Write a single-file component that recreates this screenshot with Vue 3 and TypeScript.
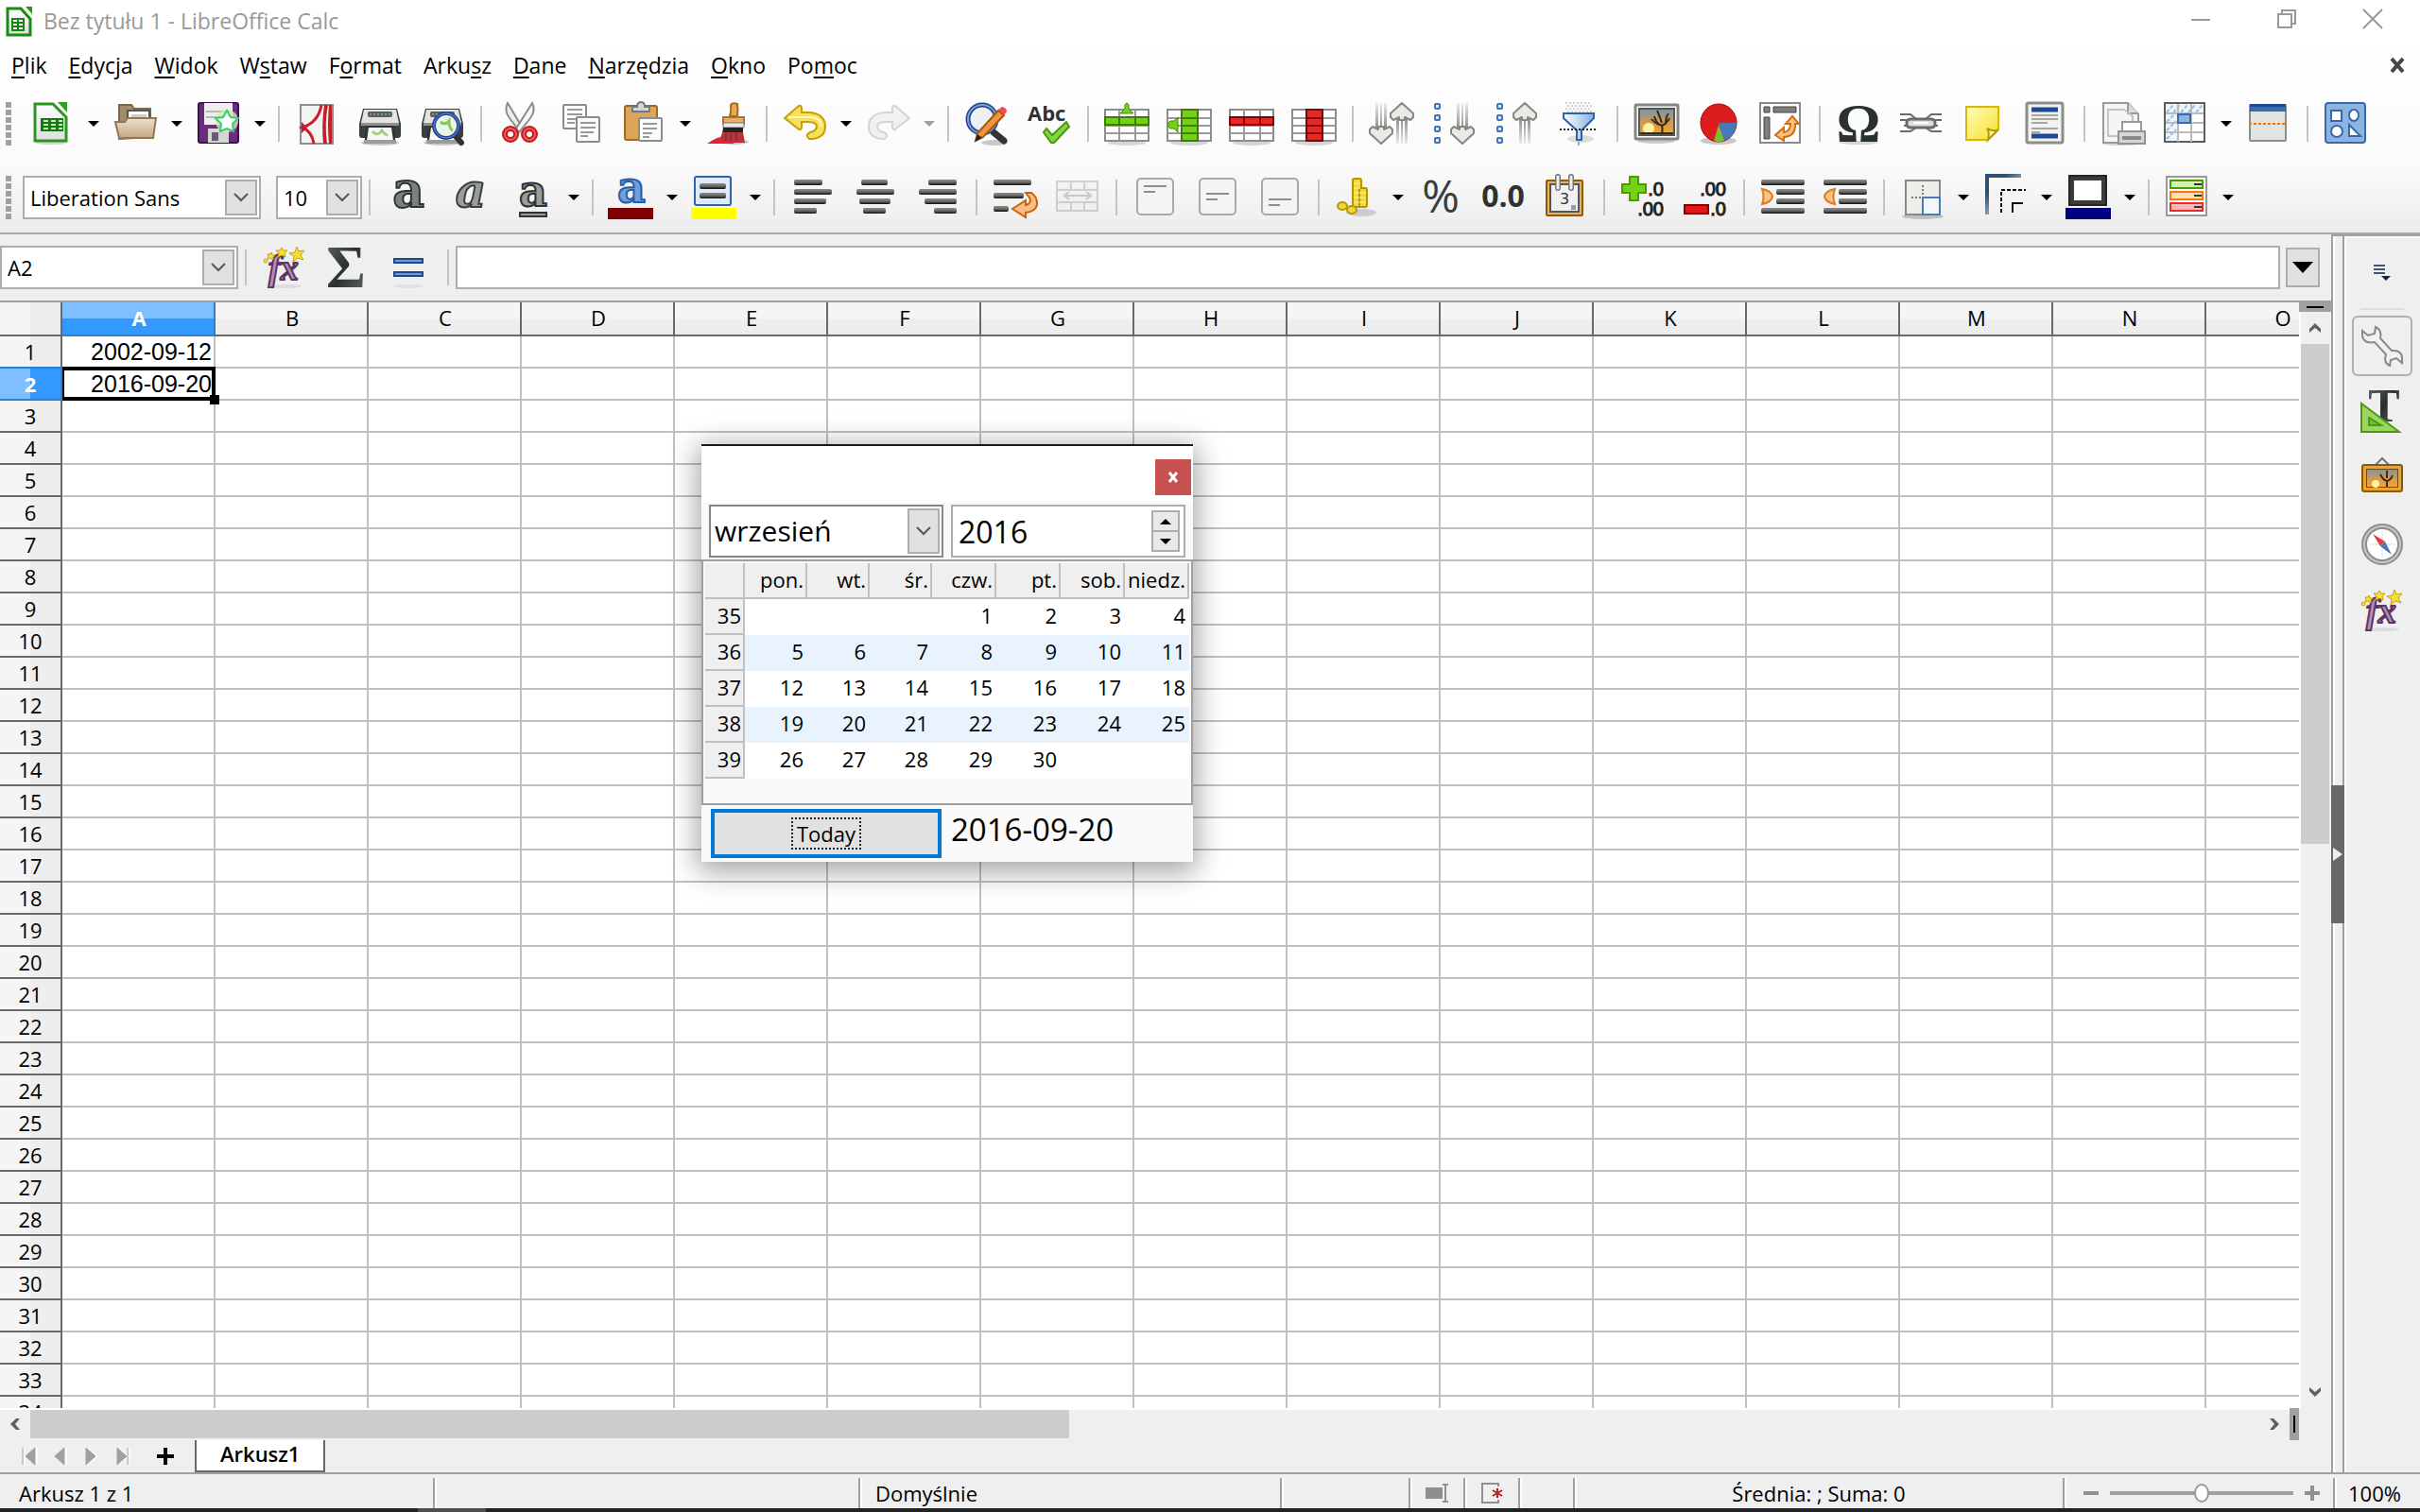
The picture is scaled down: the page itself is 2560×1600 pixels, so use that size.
<script setup lang="ts">
import { ref } from 'vue'

interface Tool {
  icon?: string
  label?: string
  menu?: boolean
  off?: boolean
  sep?: boolean
}

const sep: Tool = { sep: true }
const tool = (icon: string, label: string, menu = false, off = false): Tool => ({ icon, label, menu, off })

const menus: [string, string, string][] = [
  ['', 'P', 'lik'], ['', 'E', 'dycja'], ['', 'W', 'idok'], ['W', 's', 'taw'], ['F', 'o', 'rmat'],
  ['Arku', 's', 'z'], ['', 'D', 'ane'], ['', 'N', 'arzędzia'], ['', 'O', 'kno'], ['Po', 'm', 'oc'],
]

const standardBar: Tool[] = [
  tool('new', 'Nowy', true), tool('open', 'Otwórz', true), tool('save', 'Zapisz', true), sep,
  tool('pdf', 'Eksportuj jako PDF'), tool('print', 'Drukuj'), tool('preview', 'Podgląd wydruku'), sep,
  tool('cut', 'Wytnij'), tool('copy', 'Kopiuj'), tool('paste', 'Wklej', true), tool('brush', 'Klonuj formatowanie'), sep,
  tool('undo', 'Cofnij', true), tool('redo', 'Ponów', true, true), sep,
  tool('find', 'Znajdź i zamień'), tool('spell', 'Pisownia'), sep,
  tool('rowAdd', 'Wstaw wiersz'), tool('colAdd', 'Wstaw kolumnę'), tool('rowDel', 'Usuń wiersz'), tool('colDel', 'Usuń kolumnę'), sep,
  tool('sort', 'Sortuj'), tool('sortAsc', 'Sortuj rosnąco'), tool('sortDesc', 'Sortuj malejąco'), tool('filter', 'Autofiltr'), sep,
  tool('image', 'Obraz'), tool('chart', 'Wykres'), tool('pivot', 'Tabela przestawna'), sep,
  tool('omega', 'Znak specjalny'), tool('link', 'Hiperłącze'), tool('note', 'Komentarz'), tool('header', 'Główki i stopki'), sep,
  tool('area', 'Obszar wydruku'), tool('freeze', 'Zablokuj wiersze i kolumny', true), tool('split', 'Podziel okno'), sep,
  tool('shapes', 'Funkcje rysunkowe'),
]

const formatBar: Tool[] = [
  sep, tool('bold', 'Pogrubienie'), tool('italic', 'Kursywa'), tool('under', 'Podkreślenie', true), sep,
  tool('color', 'Kolor czcionki', true), tool('mark', 'Kolor tła', true), sep,
  tool('left', 'Do lewej'), tool('center', 'Wyśrodkuj'), tool('right', 'Do prawej'), sep,
  tool('wrap', 'Zawijaj tekst'), tool('merge', 'Scal komórki'), sep,
  tool('vtop', 'Do góry'), tool('vmid', 'Wyśrodkuj w pionie'), tool('vbot', 'Do dołu'), sep,
  tool('coins', 'Waluta', true), tool('percent', 'Procent'), tool('number', 'Liczba'), tool('date', 'Data'), sep,
  tool('decAdd', 'Dodaj miejsce dziesiętne'), tool('decDel', 'Usuń miejsce dziesiętne'), sep,
  tool('indent', 'Zwiększ wcięcie'), tool('outdent', 'Zmniejsz wcięcie'), sep,
  tool('borders', 'Krawędzie', true), tool('lineStyle', 'Styl krawędzi', true), tool('lineColor', 'Kolor krawędzi', true), sep,
  tool('cond', 'Formatowanie warunkowe', true),
]

const formulaBar: Tool[] = [
  sep, tool('fx', 'Kreator funkcji'), tool('sigma', 'Suma'), tool('equals', 'Funkcja'), sep,
]

const sideTabs: [string, string][] = [
  ['wrench', 'Właściwości'], ['styles', 'Style'], ['gallery', 'Galeria'], ['compass', 'Nawigator'], ['fx', 'Funkcje'],
]

const bars = (rows: [number, number, number][]): string =>
  rows.map(([x, y, w]) => `<rect x="${x}" y="${y}" width="${w}" height="6" rx="2" fill="url(#bar)"/>`).join('')

const page = (x: number, y: number, w: number, h: number): string =>
  `<rect x="${x + 1}" y="${y + 1}" width="${w - 2}" height="${h - 2}" rx="1" fill="#fbfbfb" stroke="#8b8d88" stroke-width="2"/>`

const gridBase = '<ellipse cx="22" cy="42" rx="20" ry="3" fill="#000" opacity=".15"/><rect x="-1" y="7" width="46" height="33" fill="#fff" stroke="#8c8c8c" stroke-width="2"/><path d="M-1 16h46M-1 24h46M-1 32h46M14 7v33M31 7v33" stroke="#9a9a9a" stroke-width="2"/>'

const printer = '<ellipse cx="22" cy="42" rx="20" ry="3" fill="#000" opacity=".2"/><path d="M4 6h36l4 16v12q0 3-3 3H3q-3 0-3-3V22z" fill="#3a3f41"/><path d="M5 7h34l3 14H2z" fill="#e3e4e1"/><rect x="9" y="9" width="26" height="6" rx="2" fill="#55605a"/><path d="M11 12h22" stroke="#89918b" stroke-width="2" stroke-dasharray="2 2"/><path d="M2 21h40v3H2z" fill="#8d928f"/><path d="M6 30l3-6h26l3 6v12H6z" fill="#2e3436"/><path d="M10 26h24l2 14H8z" fill="#f6f8f3"/><path d="M14 30q5 6 10-1q4 6 6 4" stroke="#a5cf7d" stroke-width="3" fill="none"/><rect x="5" y="39" width="34" height="4" fill="#9a9d99"/>'

const stars = '<g fill="#f5dd3b" stroke="#c9a400" stroke-width="1"><path d="M35 0l2 5 6-1-4 5 3 5-6-2-5 4 1-6-5-3 6-1z"/><path d="M19 1l2 3 4 0-3 3 1 4-4-2-4 2 1-4-3-3 4 0z"/><path d="M8 6l1 3 3 0-2 2 0 3-3-2-3 1 1-3-1-2 3 0z"/><circle cx="2" cy="15" r="2"/></g>'

const tree = (x: number, y: number, w: number, h: number): string =>
  `<rect x="${x}" y="${y}" width="${w}" height="${h}" fill="url(#dusk)"/><circle cx="${x + 9}" cy="${y + h - 6}" r="6" fill="#fff2a0"/><path d="M${x + w - 12} ${y + h}q1-6 0-9q-6-2-8-10m8 10q5-2 8-8m-8 5q-2-6-5-13m9 13q0-6 3-10m-10 12q-5-2-8-6" stroke="#3a2c17" stroke-width="2" fill="none"/><path d="M${x} ${y + h - 1}h${w}" stroke="#3a2c17" stroke-width="2"/>`

const dotCol = '<g fill="#dce8f6" stroke="#3f73b5" stroke-width="2"><rect x="2" y="1" width="5" height="5" rx="1"/><rect x="2" y="13" width="5" height="5" rx="1"/><rect x="2" y="25" width="5" height="5" rx="1"/><rect x="2" y="37" width="5" height="5" rx="1"/></g>'

const arrowDown = (x: number): string =>
  `<path d="M${x - 6} 0h3v27h-3zM${x - 1} 0h2v27h-2zM${x + 3} 0h3v27h-3z" fill="url(#shaftDown)"/><path d="M${x - 12} 28l3-3 6 3v-3h6v3l6-3 3 3v4l-12 11-12-11z" fill="#e9ebe7" stroke="#85887f" stroke-width="2" stroke-linejoin="round"/>`

const arrowUp = (x: number): string =>
  `<path d="M${x - 6} 16h3v27h-3zM${x - 1} 16h2v27h-2zM${x + 3} 16h3v27h-3z" fill="url(#shaftUp)"/><path d="M${x - 12} 15l3 3 6-3v3h6v-3l6 3 3-3v-4L${x} 0l-12 11z" fill="#e9ebe7" stroke="#85887f" stroke-width="2" stroke-linejoin="round"/>`

const undoPath = '<path d="M0 16L15 3q3-1 3 3v4h9q16 2 16 15q0 11-13 13h-4q-5-4 1-7q6-1 7-6q0-5-9-5h-7v6q-1 4-4 1z"'

const vbox = (y: number): string =>
  `<rect x="3" y="2" width="38" height="38" rx="4" fill="#f4f4f3" stroke="#a9a9a7" stroke-width="2"/><path d="M10 ${y}h24M10 ${y + 6}h12" stroke="#8d8f8a" stroke-width="2"/>`

const icons: Record<string, string> = {
  new: '<ellipse cx="20" cy="42" rx="17" ry="2" fill="#000" opacity=".15"/><path d="M3 1h19l14 14v25H3z" fill="url(#sheet)" stroke="#2f9423" stroke-width="3"/><path d="M27 -1h10v11z" fill="#2aa01f"/><path d="M9 16h24v14H9z" fill="#137a0f"/><path d="M12 19h5M20 19h5M28 19h4M12 23h5M20 23h5M28 23h4M12 27h5M20 27h5M28 27h4" stroke="#c6eab9" stroke-width="2"/>',
  open: '<path d="M4 38V2h13l3 4h17v30z" fill="#a38d69" stroke="#7d6943" stroke-width="2"/><path d="M13 8h23v14H13z" fill="#fff" stroke="#555" stroke-width="2"/><path d="M17 12h16v8H17z" fill="#ccc"/><path d="M0 20h10l3-4h30l-3 21H4z" fill="url(#folder)" stroke="#8f7853" stroke-width="2"/>',
  save: '<rect x="0" y="0" width="42" height="42" rx="2" fill="#6c2d7e" stroke="#3d0f4c" stroke-width="2"/><path d="M6 0h30v23H6z" fill="#eeeeec"/><path d="M8 9h26M8 15h26" stroke="#b8bab5" stroke-width="2"/><path d="M10 27h22v15H10z" fill="#d3d7cf"/><path d="M14 31h7v9h-7z" fill="#6c5a75"/><circle cx="30" cy="19" r="12" fill="#cdf3a3" opacity=".8"/><path d="M30 8l4 7 8 1-6 6 1 8-7-3-7 3 1-8-6-6 8-1z" fill="#fff" stroke="#40c573" stroke-width="2"/>',
  pdf: '<rect x="4" y="2" width="34" height="41" fill="#f3f3f3" stroke="#8f8f8f" stroke-width="2"/><path d="M29 2h4q-4 20-1 41h-4q-2-20 1-41z" fill="#c61f28"/><path d="M37 2v41h-3q-2-20 0-41z" fill="#c61f28"/><path d="M26 2q-3 18-20 24q10 4 12 17" fill="none" stroke="#c61f28" stroke-width="3"/><path d="M5 20l6 6-6 6z" fill="#c61f28"/>',
  print: printer,
  preview: printer + '<path d="M35 34l7 8" stroke="#333" stroke-width="6" stroke-linecap="round"/><circle cx="26" cy="24" r="13" fill="#e9f4ea" stroke="#24478f" stroke-width="4"/><circle cx="26" cy="24" r="13" fill="none" stroke="#5f86cf" stroke-width="1"/><path d="M20 20q5 4 9-1q0 8 4 10" stroke="#8fc45a" stroke-width="3" fill="none"/>',
  cut: '<path d="M9 0q-4 8 2 16l10 13 3-4z" fill="#eee" stroke="#8a8d87" stroke-width="2"/><path d="M35 0q4 8-2 16L21 31l-3-4z" fill="#f8f8f8" stroke="#8a8d87" stroke-width="2"/><circle cx="12" cy="33" r="6" fill="none" stroke="#c8161d" stroke-width="6"/><circle cx="32" cy="33" r="6" fill="none" stroke="#c8161d" stroke-width="6"/><circle cx="12" cy="33" r="6" fill="none" stroke="#ef5a5a" stroke-width="2"/><circle cx="32" cy="33" r="6" fill="none" stroke="#ef5a5a" stroke-width="2"/>',
  copy: page(1, 1, 26, 27) + '<path d="M6 7h16M6 12h16M6 17h14M6 21h8" stroke="#999" stroke-width="2"/>' + page(15, 14, 26, 28) + '<path d="M20 21h16M20 26h16M20 31h14M20 35h8" stroke="#999" stroke-width="2"/>',
  paste: '<rect x="1" y="3" width="34" height="36" rx="2" fill="#dda45a" stroke="#9b6a26" stroke-width="2"/><path d="M9 9V4h5q0-5 4-5t4 5h5v5z" fill="#d5d7d3" stroke="#777" stroke-width="2"/>' + page(15, 15, 26, 26) + '<path d="M20 22h15M20 27h15M20 32h10M20 36h7" stroke="#999" stroke-width="2"/>',
  brush: '<ellipse cx="28" cy="41" rx="16" ry="3" fill="#000" opacity=".2"/><path d="M24 14q2-6 1-12q2-3 7-1q1 6 0 13z" fill="#e9a95b" stroke="#a56a1c" stroke-width="2"/><path d="M17 15h22v7H17z" fill="#e7ae66" stroke="#a8742f" stroke-width="2"/><path d="M17 21h22v5H17z" fill="#e8e8e6" stroke="#777" stroke-width="1"/><path d="M17 26h21v6H16z" fill="#222"/><path d="M16 31h22l2 11H8q7-4 8-11z" fill="#b73540"/><path d="M0 43q9-6 14-7l-2 4q15 0 17 3z" fill="#e8222a"/><path d="M20 32v8M25 32v8M31 32v8" stroke="#7a1d26" stroke-width="1"/>',
  undo: undoPath + ' fill="#f6e05a" stroke="#c5a000" stroke-width="2"/><path d="M4 15h24q11 1 11 10" fill="none" stroke="#fff8b8" stroke-width="2"/>',
  redo: '<g transform="translate(44 0) scale(-1 1)" opacity=".45">' + undoPath + ' fill="#e4e4e4" stroke="#a5a5a5" stroke-width="2"/></g>',
  find: '<ellipse cx="30" cy="42" rx="14" ry="3" fill="#000" opacity=".2"/><path d="M29 31l11 9" stroke="#333" stroke-width="7" stroke-linecap="round"/><circle cx="17" cy="17" r="15" fill="#eef1f4" stroke="#23438c" stroke-width="5"/><circle cx="17" cy="17" r="15" fill="none" stroke="#7b9ddd" stroke-width="2"/><path d="M10 40l2-8L34 8l6 5-22 23z" fill="#f0953c" stroke="#a8590f" stroke-width="2"/><path d="M34 7l4-3q5 1 5 5l-3 4z" fill="#ef4a50"/><path d="M9 41l3-8 5 4z" fill="#222"/>',
  spell: '<text x="-1" y="19" font-family="Open Sans" font-weight="700" font-size="22" fill="#2e3436">Abc</text><path d="M19 27l6 7L40 20l3 5-16 17h-3l-8-11z" fill="#83d63f" stroke="#4a9a0c" stroke-width="2"/>',
  rowAdd: gridBase + '<path d="M-1 15h46v8H-1z" fill="#73d216" stroke="#3f7d00" stroke-width="2"/><path d="M14 15v8M31 15v8" stroke="#3f7d00" stroke-width="2"/><path d="M15 11l5-5V2q2-4 4 0v4l5 5z" fill="#73d216" stroke="#3f8f00" stroke-width="1"/>',
  colAdd: gridBase + '<path d="M14 7h17v33H14z" fill="#73d216" stroke="#3f7d00" stroke-width="2"/><path d="M14 16h17M14 24h17M14 32h17" stroke="#3f7d00" stroke-width="2"/><path d="M10 15v16l-4-4H2q-5-4 0-8h4z" fill="#73d216" stroke="#3f8f00" stroke-width="1"/>',
  rowDel: gridBase + '<path d="M-1 15h46v8H-1z" fill="#e52828" stroke="#8b0000" stroke-width="2"/><path d="M14 15v8M31 15v8" stroke="#8b0000" stroke-width="2"/>',
  colDel: gridBase + '<path d="M14 7h17v33H14z" fill="#e52828" stroke="#8b0000" stroke-width="2"/><path d="M14 16h17M14 24h17M14 32h17" stroke="#8b0000" stroke-width="2"/>',
  sort: arrowDown(11) + arrowUp(33),
  sortAsc: dotCol + arrowDown(31),
  sortDesc: dotCol + arrowUp(31),
  filter: '<path d="M8 0h28M10 3h28M8 6h28M10 9h28" stroke="#aaa" stroke-width="1" stroke-dasharray="2 2"/><ellipse cx="24" cy="38" rx="14" ry="4" fill="#000" opacity=".12"/><path d="M6 11h32v5L25 29v10h-5V29L6 16z" fill="url(#funnel)" stroke="#2a62ab" stroke-width="2"/><path d="M2 28h40" stroke="#222" stroke-width="2" stroke-dasharray="2 2"/><path d="M22 41v4" stroke="#555" stroke-width="1"/>',
  image: '<ellipse cx="22" cy="40" rx="20" ry="3" fill="#000" opacity=".2"/><rect x="0" y="2" width="45" height="36" rx="1" fill="#fff" stroke="#85877f" stroke-width="3"/><rect x="3" y="5" width="39" height="30" fill="#55574f"/>' + tree(5, 7, 35, 26),
  chart: '<ellipse cx="22" cy="40" rx="19" ry="4" fill="#000" opacity=".2"/><ellipse cx="22" cy="21" rx="19" ry="20" fill="#dd1d1d" stroke="#a40000" stroke-width="1"/><path d="M22 21h19q-1 15-14 19z" fill="#4778b8"/><path d="M22 23l6 17q-6 2-11 0z" fill="#7cbf2f"/>',
  pivot: '<rect x="0" y="0" width="42" height="42" fill="#fff" stroke="#8b8b8b" stroke-width="2"/><path d="M4 4h6v6H4zM14 4h24v6H14zM4 15h6v23H4z" fill="#7d7f7a" stroke="#444" stroke-width="1"/><path d="M34 14l7 8h-4q1 13-12 14v4l-9-6 9-8v5q7-1 7-9h-5z" fill="#f9c48c" stroke="#d96d0a" stroke-width="2"/>',
  omega: '<ellipse cx="22" cy="42" rx="20" ry="2" fill="#000" opacity=".15"/><text x="22" y="41" text-anchor="middle" font-family="Liberation Serif" font-weight="700" font-size="58" fill="#2a3133">Ω</text>',
  link: '<g fill="none" stroke="#6a6c68" stroke-width="2"><path d="M0 12h11l6 5h10l6-5h11M0 18h6l5 4M44 18h-6l-5 4M0 30h11l6-4h10l6 4h11M4 24h7M33 24h7"/><rect x="7" y="17" width="30" height="9" rx="4" fill="#ddd" stroke-width="3"/><path d="M14 21h16" stroke="#fff"/></g>',
  note: '<path d="M4 4h34v24l-11 11H4z" fill="url(#noteFill)" stroke="#d9b800" stroke-width="2"/><path d="M27 39q2-9-1-12q8 4 12 1z" fill="#fff7a8" stroke="#b59b00" stroke-width="2"/>',
  header: '<rect x="2" y="0" width="38" height="42" rx="2" fill="#f2f2f1" stroke="#8b8d88" stroke-width="3"/><path d="M7 7h28M7 35h28" stroke="#1d4a93" stroke-width="5"/><path d="M7 13h28M7 17h28M7 21h17M7 27h28M7 31h9" stroke="#a5a7a2" stroke-width="2"/>',
  area: '<ellipse cx="20" cy="43" rx="20" ry="2" fill="#000" opacity=".15"/><path d="M1 0h26l11 12v30H1z" fill="#f5f5f4" stroke="#9a9a98" stroke-width="2"/><path d="M27 0v11h11" fill="#ddd" stroke="#999" stroke-width="2"/><path d="M32 20v-6l-9-7H6v28h11" fill="none" stroke="#c4c4c2" stroke-width="2"/><path d="M21 20h20v11H21z" fill="#fff" stroke="#999" stroke-width="2"/><path d="M17 30h28v13H17z" fill="#d6d6d4" stroke="#929290" stroke-width="2"/><path d="M21 37h20" stroke="#888" stroke-width="4"/>',
  freeze: '<rect x="0" y="0" width="42" height="41" fill="#fff" stroke="#5c5e5a" stroke-width="2"/><path d="M1 1h40v10H14v29H1z" fill="#eef4fa"/><path d="M2 10l7-8M9 10l7-8M17 10l7-8M25 10l7-8M33 10l7-8M2 20l10-10M2 29l10-10M2 38l10-10" stroke="#9bbfe2" stroke-width="2" stroke-dasharray="4 2"/><path d="M14 1v40M28 1v40M1 11h40M1 21h40M1 31h40" stroke="#b9bbb5" stroke-width="2"/><path d="M14 12h13v9H14z" fill="#8db3df" stroke="#3b6aa8" stroke-width="2"/>',
  split: '<rect x="2" y="2" width="38" height="38" rx="1" fill="#e3e3e1" stroke="#8b8d88" stroke-width="2"/><path d="M2 1h38v8H2z" fill="#356cb3"/><path d="M2 1h38v3H2z" fill="#1d4a93"/><path d="M1 22h40" stroke="#f57900" stroke-width="2" stroke-dasharray="3 2"/>',
  shapes: '<rect x="0" y="0" width="42" height="42" rx="3" fill="#8db3df" stroke="#3769ad" stroke-width="2"/><g fill="#fff" stroke="#3769ad" stroke-width="2"><rect x="6" y="8" width="11" height="11"/><ellipse cx="30" cy="13" rx="5" ry="6"/><ellipse cx="12" cy="30" rx="6" ry="6"/><path d="M25 23v12h12z"/></g>',
  bold: '<text x="22" y="32" text-anchor="middle" font-family="DejaVu Serif" font-weight="700" font-size="52" fill="#7d807c" stroke="#2e3436" stroke-width="2">a</text>',
  italic: '<text x="22" y="32" text-anchor="middle" font-family="DejaVu Serif" font-style="italic" font-weight="700" font-size="50" fill="#9a9c98" stroke="#3a3f41" stroke-width="2">a</text>',
  under: '<text x="22" y="31" text-anchor="middle" font-family="DejaVu Serif" font-weight="700" font-size="46" fill="#9a9c98" stroke="#2e3436" stroke-width="2">a</text><rect x="8" y="38" width="28" height="4" fill="#999" stroke="#2e3436" stroke-width="2"/>',
  color: '<text x="22" y="27" text-anchor="middle" font-family="DejaVu Serif" font-weight="700" font-size="46" fill="#6fa0dc" stroke="#2a5ea8" stroke-width="2">a</text><path d="M-3 33h48v12H-3z" fill="#800000"/>',
  mark: '<rect x="1" y="0" width="38" height="30" rx="2" fill="#dfeafa" stroke="#2f64ac" stroke-width="2"/>' + bars([[6, 7, 28], [6, 17, 28]]) + '<path d="M-3 33h48v12H-3z" fill="#ff0"/>',
  left: bars([[2, 3, 30], [2, 13, 40], [2, 23, 34], [2, 33, 24]]),
  center: bars([[7, 3, 28], [2, 13, 40], [5, 23, 33], [9, 33, 24]]),
  right: bars([[12, 3, 30], [2, 13, 40], [8, 23, 34], [18, 33, 24]]),
  wrap: bars([[-1, 3, 40], [-1, 17, 32], [-1, 31, 16]]) + '<path d="M33 17h6q7 5 6 13q-2 7-12 8v5l-14-9 14-9v5q7-2 4-8z" fill="#f7bd84" stroke="#cf6206" stroke-width="2"/>',
  merge: '<g opacity=".4"><rect x="0" y="5" width="43" height="31" fill="#eee" stroke="#999" stroke-width="2"/><path d="M15 5v9M29 5v9M15 27v9M29 27v9M0 14h43M0 27h43" stroke="#999" stroke-width="2"/><path d="M9 20h26M13 16l-5 4 5 4M31 16l5 4-5 4" fill="none" stroke="#888" stroke-width="2"/></g>',
  vtop: vbox(10),
  vmid: vbox(18),
  vbot: vbox(24),
  coins: '<ellipse cx="26" cy="38" rx="16" ry="4" fill="#000" opacity=".15"/><g fill="#f0d93c" stroke="#b89400" stroke-width="2"><rect x="17" y="2" width="9" height="30" rx="2"/><rect x="24" y="12" width="8" height="20" rx="2"/><ellipse cx="6" cy="31" rx="5" ry="4"/><ellipse cx="16" cy="35" rx="5" ry="4"/></g><path d="M18 7h7M18 12h7M18 17h7M18 22h7M18 27h7M25 17h6M25 22h6M25 27h6" stroke="#fff3a0" stroke-width="1"/>',
  percent: '<text x="22" y="38" text-anchor="middle" font-family="Open Sans" font-size="48" fill="#3a3d3b">%</text>',
  number: '<text x="22" y="32" text-anchor="middle" font-family="Open Sans" font-weight="700" font-size="32" fill="#2e3233">0.0</text>',
  date: '<rect x="2" y="4" width="38" height="37" rx="1" fill="#e3b36a" stroke="#8f5902" stroke-width="2"/><rect x="6" y="8" width="30" height="29" fill="#f1f1f1" stroke="#555753" stroke-width="2"/><path d="M14 0v12M28 0v12" stroke="#777" stroke-width="6" stroke-linecap="round"/><path d="M14 0v12M28 0v12" stroke="#eee" stroke-width="3" stroke-linecap="round"/><text x="21" y="29" text-anchor="middle" font-family="DejaVu Sans" font-size="16" fill="#333">3</text><path d="M28 30h5v5h-5z" fill="#999"/>',
  decAdd: '<path d="M8 0h9v8h8v9h-8v8H8v-8H0V8h8z" fill="#73d216" stroke="#4e9a06" stroke-width="2"/><text x="44" y="20" text-anchor="end" font-family="Liberation Sans" font-size="20" stroke="#222" fill="#222">.0</text><text x="44" y="41" text-anchor="end" font-family="Liberation Sans" font-size="20" stroke="#222" fill="#222">.00</text>',
  decDel: '<path d="M0 30h25v9H0z" fill="#e01818" stroke="#8b0000" stroke-width="2"/><text x="44" y="20" text-anchor="end" font-family="Liberation Sans" font-size="20" stroke="#222" fill="#222">.00</text><text x="44" y="41" text-anchor="end" font-family="Liberation Sans" font-size="20" stroke="#222" fill="#222">.0</text>',
  indent: bars([[-1, 3, 46], [15, 13, 30], [15, 23, 30], [-1, 33, 46]]) + '<path d="M0 13q10 2 11 8q-1 6-11 8q3-8 0-16z" fill="#f9c48c" stroke="#e07b1c" stroke-width="2"/>',
  outdent: bars([[-1, 3, 46], [15, 13, 30], [15, 23, 30], [-1, 33, 46]]) + '<path d="M11 13q-10 2-11 8q1 6 11 8q-3-8 0-16z" fill="#f9c48c" stroke="#e07b1c" stroke-width="2"/>',
  borders: '<ellipse cx="22" cy="42" rx="22" ry="3" fill="#000" opacity=".2"/><rect x="4" y="4" width="36" height="36" fill="#eceeea" stroke="#888a85" stroke-width="2"/><path d="M22 9v12M10 22h11" stroke="#777" stroke-width="2" stroke-dasharray="2 2"/><rect x="22" y="22" width="18" height="18" fill="#f4f6f9" stroke="#4a7abb" stroke-width="2"/>',
  lineStyle: '<path d="M2 40V-1h36" fill="none" stroke="url(#fade)" stroke-width="4"/><path d="M17 38V14h26" fill="none" stroke="#111" stroke-width="2" stroke-dasharray="4 2"/><path d="M29 38V28h11" fill="none" stroke="#111" stroke-width="2"/>',
  lineColor: '<rect x="3" y="1" width="35" height="27" fill="#fff" stroke="#3b3b3b" stroke-width="6"/><path d="M1 -1h39v31H1z" fill="none" stroke="#111" stroke-width="1"/><path d="M-3 33h48v12H-3z" fill="#000080"/>',
  cond: '<rect x="0" y="0" width="42" height="41" fill="#fff" stroke="#999" stroke-width="2"/><g stroke-width="2"><rect x="4" y="4" width="34" height="8" fill="#d3f2b0" stroke="#4e9a06"/><rect x="4" y="16" width="34" height="8" fill="#fde0b5" stroke="#f57900"/><rect x="4" y="28" width="34" height="8" fill="#f8b8b8" stroke="#ef2929"/></g><path d="M29 8h8M29 20h8M29 32h8" stroke="#2e3436" stroke-width="2"/>',
  fx: '<ellipse cx="24" cy="42" rx="16" ry="2" fill="#000" opacity=".08"/><text x="5" y="35" font-family="Liberation Serif" font-style="italic" font-weight="700" font-size="38" fill="#b98fb2" stroke="#5c3566" stroke-width="2">fx</text>' + stars,
  sigma: '<text x="21" y="43" text-anchor="middle" font-family="Liberation Serif" font-weight="700" font-size="64" fill="url(#steel)">Σ</text>',
  equals: '<ellipse cx="21" cy="42" rx="16" ry="2" fill="#000" opacity=".06"/><path d="M6 13h30v4H6zM6 27h30v4H6z" fill="#6f9cd8" stroke="#204a87" stroke-width="2"/>',
  wrench: '<path d="M1 6l6 5 7-2 1-7q7 3 5 12l12 13q10-1 11 7v6l-6-5-6 2-1 6q-7-3-4-12L14 18Q3 20 1 12z" fill="#f1f2f0" stroke="#878a85" stroke-width="2"/>',
  styles: '<text x="24" y="32" text-anchor="middle" font-family="Liberation Serif" font-weight="700" font-size="50" fill="url(#steel)">T</text><path d="M0 13v30h40z" fill="#9bd564" stroke="#4e9a06" stroke-width="2"/><path d="M8 28v8h13z" fill="#73b83a" stroke="#4e9a06" stroke-width="2"/>',
  gallery: '<path d="M14 9l8-8 8 8" fill="none" stroke="#777" stroke-width="2"/><rect x="1" y="8" width="42" height="28" rx="2" fill="#e9a23f" stroke="#8f5902" stroke-width="2"/><rect x="5" y="12" width="34" height="20" fill="#6d4a0c"/><rect x="6" y="13" width="32" height="18" fill="url(#dusk)"/><circle cx="15" cy="28" r="4" fill="#fff2a0"/><path d="M27 31v-6q-4-1-7-7m7 7q4-1 6-6m-6 3v-8" stroke="#3a2c17" stroke-width="2" fill="none"/>',
  compass: '<circle cx="22" cy="22" r="19" fill="#fff" stroke="#8c8e89" stroke-width="6"/><circle cx="22" cy="22" r="19" fill="none" stroke="#c5c7c2" stroke-width="2"/><path d="M22 8v28M8 22h28" stroke="#ddd" stroke-width="1"/><path d="M12 11l13 8-5 5z" fill="#e04040"/><path d="M32 33l-12-9 5-5z" fill="#4a7abb"/>',
}

const columns = 'ABCDEFGHIJKLMNO'.split('')
const rowCount = 34
const values: Record<string, string> = { A1: '2002-09-12', A2: '2016-09-20' }

const weekdays = ['pon.', 'wt.', 'śr.', 'czw.', 'pt.', 'sob.', 'niedz.']
const weeks = [35, 36, 37, 38, 39].map((number, i) => ({
  number,
  days: weekdays.map((_, d) => {
    const day = i * 7 + d - 2
    return day > 0 && day <= 30 ? String(day) : ''
  }),
}))

const nav: [string, string][] = [
  ['Pierwszy arkusz', 'M1 0v18M14 0v18L4 9z'], ['Poprzedni arkusz', 'M12 0v18L2 9z'],
  ['Następny arkusz', 'M2 0v18l10-9z'], ['Ostatni arkusz', 'M2 0v18l10-9zM13 0v18'],
]

const font = ref('Liberation Sans')
const size = ref('10')
const nameBox = ref('A2')
const formula = ref('')
const month = ref('wrzesień')
const year = ref('2016')
const zoom = ref(50)
</script>

<template>
  <div class="app">
    <svg class="defs" width="0" height="0" aria-hidden="true">
      <defs>
        <linearGradient id="bar" x1="0" y1="0" x2="0" y2="1"><stop offset="0" stop-color="#8a8c88" /><stop offset=".5" stop-color="#6a6c69" /><stop offset="1" stop-color="#0c0c0c" /></linearGradient>
        <linearGradient id="sheet" x1="0" y1="0" x2="0" y2="1"><stop offset="0" stop-color="#fff" /><stop offset="1" stop-color="#ddd" /></linearGradient>
        <linearGradient id="folder" x1="0" y1="0" x2="0" y2="1"><stop offset="0" stop-color="#ece0cf" /><stop offset="1" stop-color="#c3a983" /></linearGradient>
        <linearGradient id="dusk" x1="0" y1="0" x2="0" y2="1"><stop offset="0" stop-color="#7d94ad" /><stop offset=".5" stop-color="#cf9a4e" /><stop offset="1" stop-color="#f8a52b" /></linearGradient>
        <linearGradient id="funnel"><stop offset="0" stop-color="#fff" /><stop offset="1" stop-color="#86aedb" /></linearGradient>
        <linearGradient id="noteFill" x1="0" y1="0" x2="1" y2="1"><stop offset="0" stop-color="#fffbc0" /><stop offset="1" stop-color="#f8e02a" /></linearGradient>
        <linearGradient id="steel" x1="0" y1="0" x2="1" y2="1"><stop offset="0" stop-color="#666a68" /><stop offset=".5" stop-color="#2a3032" /><stop offset="1" stop-color="#6a6e6b" /></linearGradient>
        <linearGradient id="shaftDown" x1="0" y1="0" x2="0" y2="1"><stop offset="0" stop-color="#8a8d87" stop-opacity=".15" /><stop offset="1" stop-color="#8a8d87" /></linearGradient>
        <linearGradient id="shaftUp" x1="0" y1="1" x2="0" y2="0"><stop offset="0" stop-color="#8a8d87" stop-opacity=".15" /><stop offset="1" stop-color="#8a8d87" /></linearGradient>
        <linearGradient id="fade" gradientUnits="userSpaceOnUse" x1="10" y1="10" x2="34" y2="34"><stop offset="0" stop-color="#33506f" /><stop offset="1" stop-color="#33506f" stop-opacity="0" /></linearGradient>
      </defs>
    </svg>

    <header class="chrome">
      <div class="titlebar">
        <svg class="appicon" viewBox="0 0 28 32"><path d="M2 2h14l10 11v17H2z" fill="url(#sheet)" stroke="#188a12" stroke-width="3" /><path d="M21 0h7v8z" fill="#18a303" /><path d="M6 12h14v14H6z" fill="#118a0b" /><path d="M8 14h4v2H8zM14 14h4v2h-4zM8 18h4v2H8zM14 18h4v2h-4zM8 22h4v2H8zM14 22h4v2h-4z" fill="#fff" /></svg>
        <h1>Bez tytułu 1 - LibreOffice Calc</h1>
        <button class="win" aria-label="Minimalizuj"><svg viewBox="0 0 20 20"><path d="M0 11h20" /></svg></button>
        <button class="win" aria-label="Przywróć"><svg viewBox="0 0 20 20"><path d="M1 5h14v14H1zM5 5V1h14v14h-4" /></svg></button>
        <button class="win" aria-label="Zamknij"><svg viewBox="0 0 20 20"><path d="M0 0l20 20M20 0L0 20" /></svg></button>
      </div>

      <nav class="menubar">
        <button v-for="m in menus" :key="m.join('')" class="menu">{{ m[0] }}<u>{{ m[1] }}</u>{{ m[2] }}</button>
        <button class="docclose" aria-label="Zamknij dokument"><svg viewBox="0 0 16 16"><path d="M2 1l12 14M14 1L2 15" stroke="#444" stroke-width="4" /></svg></button>
      </nav>

      <div class="toolbar first">
        <span class="grip"></span>
        <template v-for="(t, i) in standardBar" :key="i">
          <span v-if="t.sep" class="sep"></span>
          <button v-else class="tool" :class="{ wide: t.menu, off: t.off }" :aria-label="t.label">
            <svg class="glyph" viewBox="0 0 44 44" v-html="icons[t.icon!]"></svg>
            <span v-if="t.menu" class="drop"></span>
          </button>
        </template>
      </div>

      <div class="toolbar second">
        <span class="grip"></span>
        <span class="combo font">
          <select v-model="font" aria-label="Nazwa czcionki"><option>Liberation Sans</option></select>
          <span class="chev"><svg viewBox="0 0 16 10"><path d="M1 1l7 7 7-7" /></svg></span>
        </span>
        <span class="combo size">
          <select v-model="size" aria-label="Rozmiar czcionki"><option>10</option></select>
          <span class="chev"><svg viewBox="0 0 16 10"><path d="M1 1l7 7 7-7" /></svg></span>
        </span>
        <template v-for="(t, i) in formatBar" :key="i">
          <span v-if="t.sep" class="sep"></span>
          <button v-else class="tool" :class="{ wide: t.menu }" :aria-label="t.label">
            <svg class="glyph" viewBox="0 0 44 44" v-html="icons[t.icon!]"></svg>
            <span v-if="t.menu" class="drop"></span>
          </button>
        </template>
      </div>
    </header>

    <div class="body">
      <main class="work">
        <div class="formulabar">
          <span class="combo name">
            <input v-model="nameBox" type="text" aria-label="Pole nazwy">
            <button class="chev" aria-label="Lista nazw"><svg viewBox="0 0 16 10"><path d="M1 1l7 7 7-7" /></svg></button>
          </span>
          <template v-for="(t, i) in formulaBar" :key="i">
            <span v-if="t.sep" class="sep"></span>
            <button v-else class="tool" :aria-label="t.label"><svg class="glyph" viewBox="0 0 44 44" v-html="icons[t.icon!]"></svg></button>
          </template>
          <input v-model="formula" class="formula" type="text" aria-label="Wiersz wprowadzania">
          <button class="expand" aria-label="Rozwiń pasek formuły"><svg viewBox="0 0 22 12"><path d="M0 0h22L11 12z" /></svg></button>
        </div>

        <div class="sheetarea">
          <div class="gridview">
            <table class="grid">
              <colgroup><col class="rowcol"><col v-for="c in columns" :key="c" class="datacol"></colgroup>
              <thead>
                <tr><th class="corner"></th><th v-for="c in columns" :key="c" scope="col" :class="{ on: c === 'A' }">{{ c }}</th></tr>
              </thead>
              <tbody>
                <tr v-for="r in rowCount" :key="r" :class="{ before: r === 1, current: r === 2 }">
                  <th scope="row">{{ r }}</th>
                  <td v-for="c in columns" :key="c">{{ values[c + r] }}</td>
                </tr>
              </tbody>
            </table>
            <div class="cursor"></div>
          </div>
          <div class="vscroll">
            <span class="splitter"></span>
            <button aria-label="W górę"><svg viewBox="0 0 14 12"><path d="M1 11V7l6-6 6 6v4L7 6z" /></svg></button>
            <span class="track"><span class="thumb"></span></span>
            <button aria-label="W dół"><svg viewBox="0 0 14 12"><path d="M1 1v4l6 6 6-6V1L7 6z" /></svg></button>
          </div>
        </div>

        <div class="hscroll">
          <button aria-label="W lewo"><svg viewBox="0 0 12 14"><path d="M11 1H7L1 7l6 6h4L6 7z" /></svg></button>
          <span class="track"><span class="thumb"></span></span>
          <button aria-label="W prawo"><svg viewBox="0 0 12 14"><path d="M1 1h4l6 6-6 6H1l5-6z" /></svg></button>
          <span class="splitter"></span>
        </div>

        <div class="tabbar">
          <button v-for="n in nav" :key="n[0]" class="nav" :aria-label="n[0]"><svg viewBox="0 0 14 18"><path :d="n[1]" /></svg></button>
          <button class="add" aria-label="Dodaj arkusz"><svg viewBox="0 0 18 18"><path d="M9 0v18M0 9h18" /></svg></button>
          <button class="sheettab">Arkusz1</button>
        </div>
      </main>

      <button class="collapse" aria-label="Ukryj panel boczny"><span><svg viewBox="0 0 10 14"><path d="M0 0l10 7-10 7z" /></svg></span></button>

      <aside class="sidebar">
        <button class="sidemenu" aria-label="Ustawienia panelu"><svg viewBox="0 0 20 20"><path d="M1 3h12M1 7h12M1 11h12" stroke="#3f5578" stroke-width="2" /><path d="M9 14h10l-5 5z" fill="#16233f" /></svg></button>
        <hr>
        <button v-for="(s, i) in sideTabs" :key="s[0]" class="sidetab" :class="{ active: i === 0 }" :aria-label="s[1]">
          <svg class="glyph" viewBox="0 0 44 44" v-html="icons[s[0]]"></svg>
        </button>
      </aside>
    </div>

    <footer class="status">
      <span class="cell s1">Arkusz 1 z 1</span>
      <span class="cell s2"></span>
      <span class="cell s3">Domyślnie</span>
      <span class="cell s4"></span>
      <span class="cell ico"><svg viewBox="0 0 24 20"><path d="M0 4h18v12H0z" fill="#8f8f8f" /><path d="M18 1h6M21 1v18M18 19h6" stroke="#8f8f8f" stroke-width="2" /></svg></span>
      <span class="cell ico"><svg viewBox="0 0 24 24"><path d="M19 5V2H2v20h17v-3" fill="none" stroke="#8f8f8f" stroke-width="2" /><path d="M18 7v10M13 9l10 6M23 9l-10 6" stroke="#b22222" stroke-width="2" /></svg></span>
      <span class="cell ico"></span>
      <span class="cell s5">Średnia: ; Suma: 0</span>
      <span class="cell s6">
        <button aria-label="Pomniejsz"><svg viewBox="0 0 16 16"><path d="M0 8h16" /></svg></button>
        <input v-model="zoom" type="range" min="0" max="100" aria-label="Powiększenie">
        <button aria-label="Powiększ"><svg viewBox="0 0 16 16"><path d="M0 8h16M8 0v16" /></svg></button>
      </span>
      <span class="cell s7">100%</span>
    </footer>
    <div class="taskbar"><span></span></div>

    <section class="dialog" role="dialog" aria-label="Kalendarz">
      <div class="dialogtop"><button class="shut" aria-label="Zamknij kalendarz"><svg viewBox="0 0 10 10"><path d="M1 0l8 10M9 0L1 10" stroke="#fff" stroke-width="3" /></svg></button></div>
      <div class="pickers">
        <span class="combo month">
          <select v-model="month" aria-label="Miesiąc"><option>wrzesień</option></select>
          <span class="chev"><svg viewBox="0 0 16 10"><path d="M1 1l7 7 7-7" /></svg></span>
        </span>
        <span class="combo year">
          <input v-model="year" type="text" aria-label="Rok">
          <span class="spin">
            <button aria-label="Następny rok"><svg viewBox="0 0 12 6"><path d="M0 6h12L6 0z" /></svg></button>
            <button aria-label="Poprzedni rok"><svg viewBox="0 0 12 6"><path d="M0 0h12L6 6z" /></svg></button>
          </span>
        </span>
      </div>
      <div class="calbox">
        <table class="calendar">
          <colgroup><col class="wk"><col v-for="d in 3" :key="d" class="narrow"><col v-for="d in 4" :key="d + 3" class="broad"></colgroup>
          <thead><tr><th></th><th v-for="d in weekdays" :key="d" scope="col">{{ d }}</th></tr></thead>
          <tbody>
            <tr v-for="w in weeks" :key="w.number"><th scope="row">{{ w.number }}</th><td v-for="(d, i) in w.days" :key="i">{{ d }}</td></tr>
          </tbody>
        </table>
      </div>
      <div class="dialogfoot">
        <button class="today"><span>Today</span></button>
        <output>2016-09-20</output>
      </div>
    </section>
  </div>
</template>

<style>
html, body { margin: 0; background: #efefef; }
</style>

<style scoped>
.app { position: relative; display: flex; flex-direction: column; height: 100vh; overflow: hidden; background: #efefef; color: #000; font: 22px/30px "Open Sans", "Noto Sans", sans-serif; }
.app *, .app *::before { box-sizing: border-box; }
.defs { position: absolute; }
button, input, select { margin: 0; padding: 0; border: 0; border-radius: 0; background: none; color: inherit; font: inherit; outline: 0; }
button { display: flex; align-items: center; justify-content: center; flex: none; }
svg { display: block; flex: none; overflow: visible; }

.chrome { flex: none; border-bottom: 2px solid #a9a9a9; background: linear-gradient(#fff 0, #fff 46px, #fafafa 180px, #ececec 100%); }
.titlebar { display: flex; align-items: center; height: 46px; padding: 0 5px 0 6px; }
.appicon { width: 28px; height: 32px; }
h1 { flex: 1; margin: 0 0 0 12px; padding-bottom: 2px; color: #999; font-size: 23px; font-weight: 400; line-height: 30px; }
.win { width: 91px; height: 40px; align-self: flex-start; }
.win svg { width: 20px; height: 20px; fill: none; stroke: #999; stroke-width: 2; }
.menubar { display: flex; align-items: center; height: 46px; padding: 0 16px 0 12px; gap: 23px; font-size: 23px; }
.menu u { text-decoration-thickness: 2px; text-underline-offset: 3px; text-decoration-skip-ink: none; }
.docclose { margin-left: auto; }
.docclose svg { width: 16px; height: 16px; }

.toolbar { display: flex; align-items: center; height: 78px; }
.toolbar.second { height: 76px; padding-top: 2px; }
.grip { flex: none; width: 6px; height: 46px; margin-left: 6px; background: repeating-linear-gradient(#a0a0a0 0, #a0a0a0 6px, transparent 6px, transparent 8px); }
.first .grip { margin-right: 11px; }
.second .grip { margin-right: 12px; }
.tool { width: 66px; height: 60px; }
.tool.wide { width: 88px; justify-content: flex-start; padding-left: 11px; }
.tool.wide .drop { margin-left: 15px; }
.glyph { width: 44px; height: 44px; }
.drop { width: 0; border: 6px solid transparent; border-top: 6px solid #000; border-bottom: 0; }
.off .drop { border-top-color: #a0a0a0; }
.sep { flex: none; width: 16px; height: 38px; background: linear-gradient(#c4c4c4, #c4c4c4) 7px 0 / 2px 100% no-repeat; }

.combo { position: relative; display: flex; align-items: center; flex: none; height: 46px; border: 2px solid #abadb3; background: #fff; }
.combo select, .combo input { flex: 1; width: 100%; min-width: 0; height: 100%; padding-left: 6px; appearance: none; }
.chev { display: flex; align-items: center; justify-content: center; flex: none; width: 34px; height: 38px; margin-right: 2px; border: 2px solid #adadad; background: #e1e1e1; }
.chev svg { width: 16px; height: 10px; fill: none; stroke: #555; stroke-width: 2; }
.font { width: 252px; margin-right: 16px; }
.size { width: 91px; }
.name { width: 252px; }

.body { display: flex; flex: 1; min-height: 0; }
.work { display: flex; flex: 1; flex-direction: column; min-width: 0; border-bottom: 2px solid #a0a0a0; }
.formulabar { display: flex; align-items: center; flex: none; height: 72px; padding: 0 12px 0 0; border-bottom: 2px solid #a0a0a0; }
.formula { flex: 1; min-width: 0; height: 46px; padding: 0 6px; border: 2px solid #abadb3; background: #fff; }
.expand { width: 36px; height: 42px; margin-left: 6px; border: 2px solid #adadad; background: #e1e1e1; }
.expand svg { width: 22px; height: 12px; }

.sheetarea { display: flex; flex: 1; min-height: 0; background: #fff; }
.gridview { position: relative; flex: 1; min-width: 0; overflow: hidden; }
.grid { width: 2496px; border-collapse: separate; border-spacing: 0; table-layout: fixed; }
.rowcol { width: 66px; }
.datacol { width: 162px; }
.grid th, .grid td { height: 34px; padding: 0; white-space: nowrap; line-height: 30px; }
.grid th { border-right: 2px solid #696969; border-bottom: 2px solid #696969; font-weight: 400; text-align: center; }
.grid thead th { height: 36px; padding: 0 0 2px 2px; background: linear-gradient(#f5f5f5 50%, #eee 50%); }
.grid tbody th, .grid thead .corner { background: linear-gradient(90deg, #f5f5f5 50%, #eee 50%); }
.grid thead th.on { border-color: #2a80d5; background: linear-gradient(#80bfff 50%, #39f 50%); color: #fff; font-weight: 700; }
.grid .before th { border-bottom-color: #2a80d5; }
.grid .current th { border-color: #2a80d5; background: linear-gradient(90deg, #80bfff 50%, #39f 50%); color: #fff; font-weight: 700; }
.grid td { padding-right: 2px; border-right: 2px solid #c0c0c0; border-bottom: 2px solid #c0c0c0; font: 25px/30px "Liberation Sans", Arial, sans-serif; text-align: right; }
.cursor { position: absolute; left: 66px; top: 68px; width: 162px; height: 36px; border: 4px solid #000; border-left-width: 2px; }
.cursor::before { content: ""; position: absolute; right: -8px; bottom: -8px; width: 10px; height: 10px; background: #000; }

.vscroll { display: flex; flex: none; flex-direction: column; width: 34px; border-left: 2px solid #fff; background: #efefef; }
.vscroll .splitter { flex: none; height: 10px; margin-left: -2px; background: linear-gradient(#000, #000) 50% 4px / 18px 2px no-repeat #a0a0a0; }
.vscroll button { width: 30px; height: 34px; }
.vscroll button svg { width: 14px; height: 12px; fill: #606060; }
.vscroll .track { display: flex; flex: 1; flex-direction: column; }
.vscroll .thumb { width: 30px; height: 48.4%; background: #cdcdcd; }
.hscroll { display: flex; flex: none; height: 32px; margin-right: 34px; border-top: 2px solid #fff; }
.hscroll button { width: 32px; height: 30px; }
.hscroll button svg { width: 12px; height: 14px; fill: #606060; }
.hscroll .track { display: flex; flex: 1; }
.hscroll .thumb { width: 46.6%; height: 30px; background: #cdcdcd; }
.hscroll .splitter { flex: none; width: 10px; height: 34px; margin-top: -2px; background: linear-gradient(#000, #000) 4px 50% / 2px 18px no-repeat #a0a0a0; }

.tabbar { display: flex; flex: none; height: 36px; padding-left: 13px; }
.nav { width: 33px; height: 38px; }
.nav svg { width: 14px; height: 18px; fill: #a0a0a0; stroke: #a0a0a0; stroke-width: 1; filter: drop-shadow(2px 0 0 #fff); }
.add { width: 59px; height: 38px; }
.add svg { width: 18px; height: 18px; stroke: #000; stroke-width: 4; }
.sheettab { height: 34px; margin: 2px 0 0 2px; padding: 0 25px 4px; border: 2px solid #696969; border-top: 0; background: #fff; font-weight: 600; }

.collapse { width: 16px; align-items: center; justify-content: flex-start; border: solid #a0a0a0; border-width: 2px 0; background: linear-gradient(90deg, #a0a0a0 2px, #fff 2px, #fff 4px, #efefef 4px, #efefef 12px, #a0a0a0 12px, #a0a0a0 14px, #fff 14px); }
.collapse span { display: flex; align-items: center; width: 14px; height: 146px; padding-left: 2px; background: #696969; }
.collapse svg { width: 10px; height: 14px; fill: #f0f0f0; }
.sidebar { display: flex; flex: none; flex-direction: column; align-items: center; width: 78px; padding-right: 2px; border: solid #a0a0a0; border-width: 2px 0; box-shadow: inset 0 2px #fff; }
.sidemenu { width: 64px; height: 76px; }
.sidemenu svg { width: 20px; height: 20px; }
hr { width: 46px; height: 2px; margin: 0 0 6px; border: 0; background: #ddd; }
.sidetab { width: 64px; height: 64px; margin-bottom: 6px; border-radius: 6px; }
.sidetab.active { border: 2px solid #b0b0b0; }

.status { display: flex; flex: none; height: 36px; padding-top: 4px; }
.cell { display: flex; align-items: center; flex: none; min-width: 0; white-space: nowrap; }
.cell + .cell { border-left: 2px solid #a0a0a0; box-shadow: inset 2px 0 #fff; }
.s1 { flex: 438 1 0; padding-left: 20px; }
.s2 { flex: 448 1 0; }
.s3 { flex: 428 1 0; padding-left: 16px; }
.s4 { width: 136px; }
.ico { width: 58px; justify-content: center; }
.ico svg { width: 24px; height: 24px; }
.s5 { flex: 516 1 0; justify-content: center; }
.s6 { width: 286px; padding: 0 14px 0 20px; justify-content: space-between; }
.s6 svg { width: 16px; height: 16px; stroke: #8f8f8f; stroke-width: 4; }
.s6 input { width: 194px; height: 20px; appearance: none; }
.s6 input::-webkit-slider-runnable-track { height: 4px; background: #a0a0a0; }
.s6 input::-webkit-slider-thumb { width: 16px; height: 20px; margin-top: -8px; border: 2px solid #999; border-radius: 50%; background: #fff; appearance: none; }
.s7 { width: 92px; padding-left: 14px; }
.taskbar { display: flex; flex: none; height: 4px; background: #202224; }
.taskbar span { width: 72px; margin-left: 442px; background: #4c4e50; }

.dialog { position: absolute; left: 742px; top: 470px; width: 520px; border-top: 2px solid #1a1a1a; background: #fafafa; box-shadow: 0 6px 28px 4px rgba(0, 0, 0, .36); }
.dialogtop { display: flex; justify-content: flex-end; height: 60px; padding: 14px 2px 0 0; background: #fff; }
.shut { width: 38px; height: 38px; background: #c75050; }
.shut svg { width: 10px; height: 10px; }
.pickers { display: flex; gap: 8px; padding: 2px 8px; }
.pickers .combo { flex: 1; height: 56px; font-size: 32px; line-height: 44px; }
.pickers .month { border-color: #828790; }
.month select { padding-left: 4px; font-size: 30px; }
.month .chev { height: 48px; }
.spin { display: flex; flex: none; flex-direction: column; width: 30px; height: 44px; margin-right: 4px; border: 2px solid #adadad; background: #e9e9e9; }
.spin button { flex: 1; }
.spin button + button { border-top: 2px solid #adadad; }
.spin svg { width: 12px; height: 6px; }
.calbox { height: 260px; padding: 2px; border: 2px solid #a0a0a0; }
.calendar { width: 100%; border-collapse: separate; border-spacing: 0; table-layout: fixed; background: #fff; }
.wk { width: 42px; }
.narrow { width: 66px; }
.broad { width: 68px; }
.calendar th, .calendar td { height: 38px; padding: 0 4px 4px 0; font-weight: 400; line-height: 30px; text-align: right; white-space: nowrap; }
.calendar th { padding: 0 2px 2px 0; border-right: 2px solid #c0c0c0; border-bottom: 2px solid #c0c0c0; background: #efefef; }
.calendar tbody tr:nth-child(even) td { background: #e8f3fe; }
.dialogfoot { display: flex; align-items: flex-start; gap: 10px; padding: 4px 10px; }
.today { width: 244px; height: 52px; border: 4px solid #0078d7; background: #e1e1e1; }
.today span { padding: 0 4px; border: 2px dotted #222; }
output { font-size: 33px; line-height: 44px; }
</style>
